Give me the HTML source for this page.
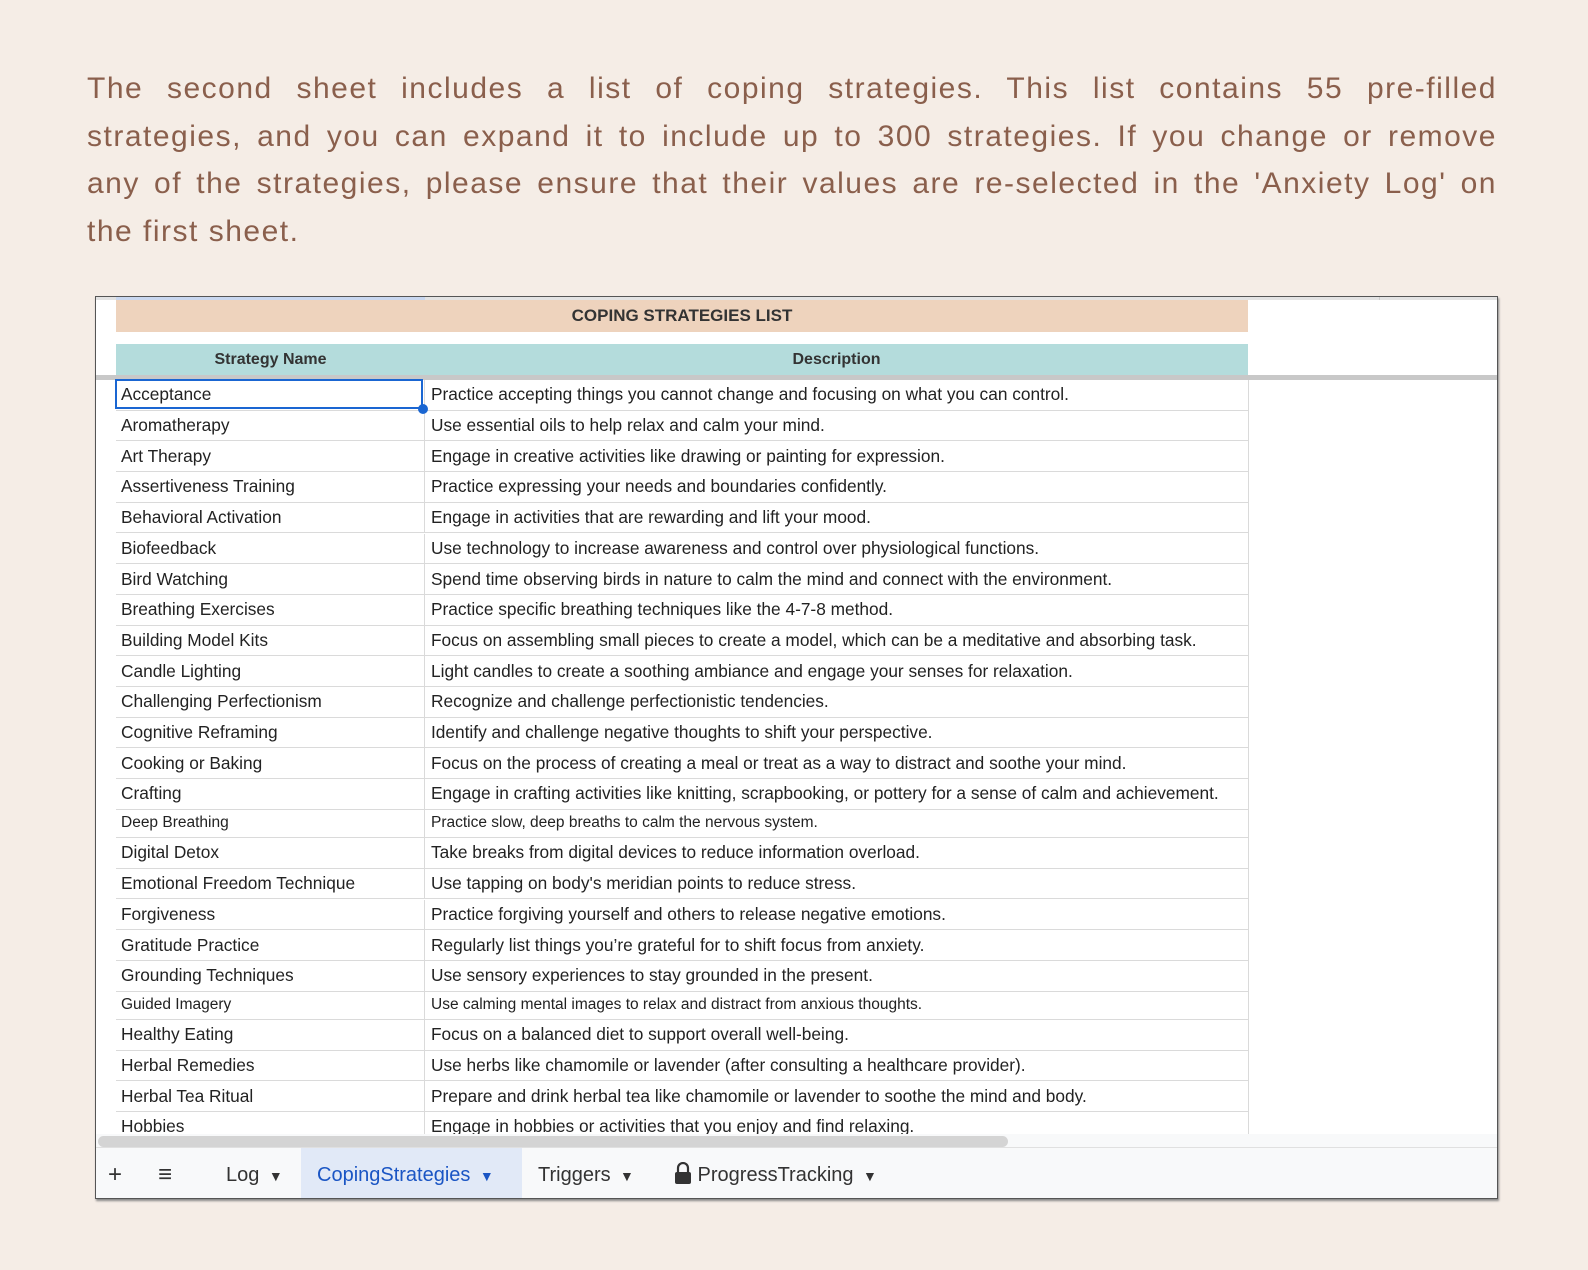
<!DOCTYPE html>
<html><head><meta charset="utf-8"><style>
*{margin:0;padding:0;box-sizing:border-box}
body{width:1588px;height:1270px;background:#f5ede6;position:relative;overflow:hidden;font-family:"Liberation Sans",sans-serif}
.p{position:absolute;left:87px;top:65px;width:1410px;color:#8a5f4c;font-size:30px;line-height:47.6px;letter-spacing:1.5px}
.p div{text-align:justify;text-align-last:justify;white-space:nowrap}
.p div.l{text-align-last:left}
.box{position:absolute;left:95px;top:296px;width:1403px;height:903px;background:#fff;border:1px solid #555;box-shadow:1px 2px 2px #888;overflow:hidden}
.a{position:absolute}
.row{position:absolute;left:20px;width:1132px;border-bottom:1px solid #dadada;font-size:17.3px;color:#222;display:flex;align-items:center}
.c1{width:309px;padding-left:5px;border-right:1px solid #dadada;height:100%;display:flex;align-items:center}
.c2{padding-left:6px;height:100%;display:flex;align-items:center}
.row.sm{font-size:15.5px}
.tabs{position:absolute;left:0;top:850px;width:1403px;height:52px;background:#f8f9fa;border-top:1px solid #e0e0e0;font-size:20px;color:#333}
.tabs div{position:absolute;top:0;height:52px;line-height:54px}
.ar{font-size:14px}
</style></head><body>
<div class="p">
<div>The second sheet includes a list of coping strategies. This list contains 55 pre-filled</div>
<div>strategies, and you can expand it to include up to 300 strategies. If you change or remove</div>
<div>any of the strategies, please ensure that their values are re-selected in the 'Anxiety Log' on</div>
<div class="l">the first sheet.</div>
</div>
<div class="box">
<div class="a" style="left:0;top:0;width:1403px;height:3px;background:#e3e3e3"></div>
<div class="a" style="left:20px;top:0;width:309px;height:3px;background:#c9d7ef"></div>
<div class="a" style="left:1283px;top:0;width:1px;height:3px;background:#ccc"></div>
<div class="a" style="left:20px;top:3px;width:1132px;height:32px;background:#eed3bd;text-align:center;font-weight:bold;font-size:17px;line-height:32px;color:#333">COPING STRATEGIES LIST</div>
<div class="a" style="left:20px;top:47px;width:1132px;height:31px;background:#b4dcdc;font-weight:bold;font-size:16px;line-height:31px;color:#333"><span style="position:absolute;left:0;width:309px;text-align:center">Strategy Name</span><span style="position:absolute;left:309px;width:823px;text-align:center">Description</span></div>
<div class="a" style="left:0;top:78px;width:1403px;height:5px;background:#c8c8c8"></div>
<div class="a" style="left:1152px;top:83px;width:1px;height:760px;background:#dadada"></div>
<div id="rows"></div>
<div class="a" style="left:19px;top:82px;width:308px;height:30px;border:2px solid #1a66d2"></div>
<div class="a" style="left:322px;top:107px;width:10px;height:10px;border-radius:50%;background:#1a66d2"></div>
<div class="a" style="left:0;top:837px;width:1403px;height:14px;background:#f8f9fa"></div>
<div class="a" style="left:2px;top:839px;width:910px;height:11px;border-radius:6px;background:#d4d4d4"></div>
<div class="tabs">
<div style="left:12px;font-size:24px">+</div>
<div style="left:62px;font-size:24px">≡</div>
<div style="left:130px">Log <span class="ar">&nbsp;▼</span></div>
<div style="left:205px;width:221px;background:#e1e9f7;color:#1a55c4;padding-left:16px">CopingStrategies <span class="ar">&nbsp;▼</span></div>
<div style="left:442px">Triggers <span class="ar">&nbsp;▼</span></div>
<div style="left:578px"><svg width="18" height="22" viewBox="0 0 18 22" style="vertical-align:-3px"><path d="M4 10V6a5 5 0 0110 0v4" fill="none" stroke="#333" stroke-width="2.2"/><rect x="1" y="10" width="16" height="12" rx="2" fill="#333"/></svg> ProgressTracking <span class="ar">&nbsp;▼</span></div>
</div>
</div>
<script>
var d=[["Acceptance","Practice accepting things you cannot change and focusing on what you can control."],
["Aromatherapy","Use essential oils to help relax and calm your mind."],
["Art Therapy","Engage in creative activities like drawing or painting for expression."],
["Assertiveness Training","Practice expressing your needs and boundaries confidently."],
["Behavioral Activation","Engage in activities that are rewarding and lift your mood."],
["Biofeedback","Use technology to increase awareness and control over physiological functions."],
["Bird Watching","Spend time observing birds in nature to calm the mind and connect with the environment."],
["Breathing Exercises","Practice specific breathing techniques like the 4-7-8 method."],
["Building Model Kits","Focus on assembling small pieces to create a model, which can be a meditative and absorbing task."],
["Candle Lighting","Light candles to create a soothing ambiance and engage your senses for relaxation."],
["Challenging Perfectionism","Recognize and challenge perfectionistic tendencies."],
["Cognitive Reframing","Identify and challenge negative thoughts to shift your perspective."],
["Cooking or Baking","Focus on the process of creating a meal or treat as a way to distract and soothe your mind."],
["Crafting","Engage in crafting activities like knitting, scrapbooking, or pottery for a sense of calm and achievement."],
["Deep Breathing","Practice slow, deep breaths to calm the nervous system.",1],
["Digital Detox","Take breaks from digital devices to reduce information overload."],
["Emotional Freedom Technique","Use tapping on body's meridian points to reduce stress."],
["Forgiveness","Practice forgiving yourself and others to release negative emotions."],
["Gratitude Practice","Regularly list things you’re grateful for to shift focus from anxiety."],
["Grounding Techniques","Use sensory experiences to stay grounded in the present."],
["Guided Imagery","Use calming mental images to relax and distract from anxious thoughts.",1],
["Healthy Eating","Focus on a balanced diet to support overall well-being."],
["Herbal Remedies","Use herbs like chamomile or lavender (after consulting a healthcare provider)."],
["Herbal Tea Ritual","Prepare and drink herbal tea like chamomile or lavender to soothe the mind and body."],
["Hobbies","Engage in hobbies or activities that you enjoy and find relaxing."]];
var y=83,h='';
d.forEach(function(r){var hh=r[2]?28.3:30.7;h+='<div class="row'+(r[2]?' sm':'')+'" style="top:'+y+'px;height:'+hh+'px"><div class="c1">'+r[0]+'</div><div class="c2">'+r[1]+'</div></div>';y+=hh;});
document.getElementById('rows').innerHTML=h;
</script>
</body></html>
